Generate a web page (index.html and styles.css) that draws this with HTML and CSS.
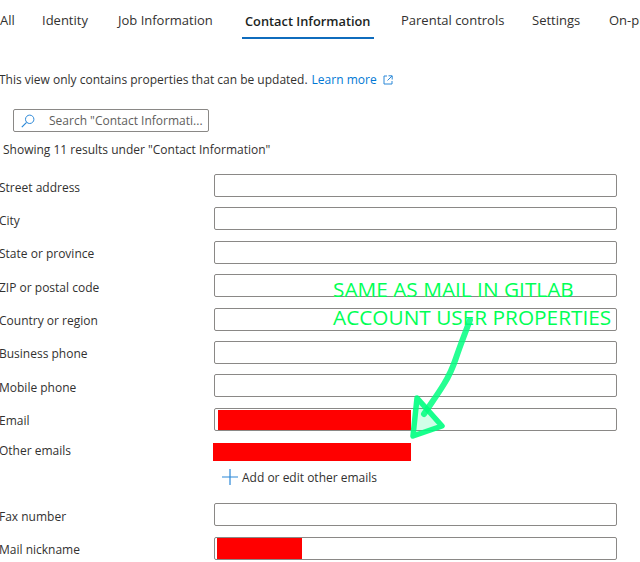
FILE: index.html
```html
<!DOCTYPE html>
<html lang="en">
<head>
<meta charset="utf-8">
<title>Contact Information</title>
<link rel="stylesheet" href="styles.css">
</head>
<body>
<div class="page">
  <nav class="tabs">
    <span class="tab tab-all">All</span>
    <span class="tab tab-identity">Identity</span>
    <span class="tab tab-job">Job Information</span>
    <span class="tab tab-active">Contact Information</span>
    <span class="tab tab-parental">Parental controls</span>
    <span class="tab tab-settings">Settings</span>
    <span class="tab">On-premises</span>
  </nav>
  <p class="notice">This view only contains properties that can be updated. <a class="link">Learn more</a>
    <svg class="ext" viewBox="0 0 10 10" width="10" height="10"><path d="M4 1H1v8h8V6M5.500 .8h3.700v3.700M9 1 4.500 5.500" fill="none" stroke="#2b88d8" stroke-width="1"/></svg>
  </p>
  <div class="search">
    <svg class="search-icon" viewBox="0 0 14 14" width="14" height="14"><circle cx="8.700" cy="5.300" r="4.200" fill="none" stroke="#2b88d8" stroke-width="1"/><path d="M5.600 8.300 .8 13.200" fill="none" stroke="#2b88d8" stroke-width="1.200"/></svg>
    <span class="search-text">Search "Contact Informati...</span>
  </div>
  <p class="count">Showing 11 results under "Contact Information"</p>
  <div class="fields">
    <div class="row"><label class="label">Street address</label><div class="input"></div></div>
    <div class="row"><label class="label">City</label><div class="input"></div></div>
    <div class="row"><label class="label">State or province</label><div class="input"></div></div>
    <div class="row"><label class="label">ZIP or postal code</label><div class="input"></div></div>
    <div class="row"><label class="label">Country or region</label><div class="input"></div></div>
    <div class="row"><label class="label">Business phone</label><div class="input"></div></div>
    <div class="row"><label class="label">Mobile phone</label><div class="input"></div></div>
    <div class="row"><label class="label">Email</label><div class="input"><div class="red red-email"></div></div></div>
    <div class="row row-other"><label class="label label-other">Other emails</label><div class="red red-other"></div></div>
    <div class="add">
      <svg viewBox="0 0 16 16" width="16" height="16"><path d="M8 0v16M0 8h16" fill="none" stroke="#2b88d8" stroke-width="1.200"/></svg>
      <span>Add or edit other emails</span>
    </div>
    <div class="row"><label class="label">Fax number</label><div class="input"></div></div>
    <div class="row"><label class="label">Mail nickname</label><div class="input"><div class="red red-nick"></div></div></div>
  </div>
  <div class="note">
    <div>SAME AS MAIL IN GITLAB</div>
    <div>ACCOUNT USER PROPERTIES</div>
  </div>
  <svg class="arrow" viewBox="0 0 640 562" width="640" height="562">
    <path class="arrow-line" d="M470 320C464 336 460 346 456 358C452 370 449 376 444 384C438 394 432 402 424 414"/>
    <path class="arrow-head" d="M417 398L442 426L413 436Z"/>
  </svg>
</div>
</body>
</html>
```
FILE: styles.css
```css
html, body { margin: 0; padding: 0; background: #fff; }
.page {
  position: relative;
  width: 640px;
  height: 562px;
  overflow: hidden;
  font-family: "Open Sans", "Noto Sans", sans-serif;
  font-size: 12px;
  color: #323130;
}
.tabs {
  display: flex;
  height: 39px;
  white-space: nowrap;
  font-size: 13px;
  line-height: 17px;
  padding-top: 12px;
  box-sizing: border-box;
}
.tab { display: block; flex: none; }
.tab-all { width: 42px; }
.tab-identity { width: 76px; }
.tab-job { width: 124px; }
.tab-active {
  width: 132px;
  height: 27px;
  margin-right: 27px;
  padding-left: 3px;
  padding-top: 1px;
  box-sizing: border-box;
  font-size: 12.800px;
  font-weight: 600;
  color: #201f1e;
  border-bottom: 2px solid #0f6cbd;
}
.tab-parental { width: 131px; }
.tab-settings { width: 77px; }
.notice {
  margin: 33px 0 0 -1px;
  line-height: 16px;
  white-space: nowrap;
  display: flex;
  align-items: center;
}
.link { color: #0078d4; margin-left: 4px; }
.ext { margin-left: 6px; }
.search {
  display: flex;
  align-items: center;
  width: 196px;
  height: 23px;
  box-sizing: border-box;
  margin: 21px 0 0 13px;
  border: 1px solid #8a8886;
  border-radius: 2px;
}
.search-icon { margin-left: 7px; }
.search-text { margin-left: 14px; color: #605e5c; white-space: nowrap; }
.count { margin: 9px 0 0 3px; line-height: 17px; white-space: nowrap; }
.fields { margin-top: 16px; }
.row {
  display: flex;
  align-items: center;
  height: 23px;
  margin-bottom: 10.400px;
}
.label { width: 215px; margin: 3px 0 0 -1px; flex: none; }
.label-other { margin-top: -5px; }
.input {
  width: 403px;
  height: 23px;
  box-sizing: border-box;
  border: 1px solid #8a8886;
  border-radius: 2px;
  padding: 1px 0 0 3px;
  background: #fff;
}
.red { background: #f00; }
.red-email { width: 193px; height: 20px; }
.red-other { width: 198px; height: 18px; margin: -2px 0 0 -1px; }
.red-nick { width: 85px; height: 21px; margin: -1px 0 0 -1px; padding: 0; }
.row-other { margin-bottom: 3px; }
.add {
  display: flex;
  align-items: center;
  gap: 4px;
  height: 20px;
  margin: 0 0 16px 222px;
}
.note {
  position: absolute;
  left: 333px;
  top: 275px;
  font-size: 20.800px;
  line-height: 28px;
  color: #00ff55;
  white-space: nowrap;
}
.arrow { position: absolute; left: 0; top: 0; pointer-events: none; }
.arrow-line { fill: none; stroke: #00ff80; stroke-width: 6; stroke-linecap: round; opacity: .85; }
.arrow-head { fill: rgba(0, 255, 128, .2); stroke: #00ff80; stroke-width: 5.500; stroke-linejoin: round; opacity: .9; }
```
